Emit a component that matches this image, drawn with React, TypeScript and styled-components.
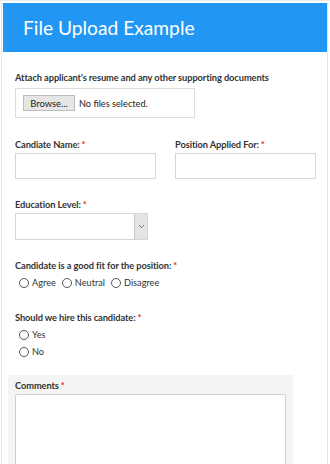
import React from "react";
import styled, { createGlobalStyle } from "styled-components";

const GlobalStyle = createGlobalStyle`
  html, body {
    margin: 0;
    padding: 0;
    background: #ffffff;
  }
  body {
    font-family: Lato, "Open Sans", sans-serif;
    color: #333;
  }
`;

const Page = styled.div`
  width: 330px;
  height: 464px;
  overflow: hidden;
  padding: 2px 0 0 1px;
  box-sizing: border-box;
  border-top: 1px solid #ececec;
`;

const Card = styled.div`
  width: 327px;
  height: 470px;
  box-sizing: border-box;
  border-left: 1px solid #e4e4e4;
  border-right: 1px solid #e4e4e4;
  background: #fff;
`;

const Header = styled.div`
  height: 49px;
  background: #2196f3;
  display: flex;
  align-items: center;
  padding-left: 20px;
  margin-left: 1px;
`;

const Title = styled.h1`
  margin: 0;
  color: #fff;
  font-size: 19.2px;
  font-weight: 400;
`;

const Body = styled.div`
  padding: 20px 0 0 13px;
  display: flex;
  flex-direction: column;
`;

const Field = styled.div<{ gap?: number }>`
  display: flex;
  flex-direction: column;
  margin-bottom: ${(p) => p.gap ?? 0}px;
`;

const Label = styled.label`
  display: block;
  font-size: 9.3px;
  font-weight: 700;
  color: #333;
  line-height: 12px;
  margin-bottom: 2px;
  letter-spacing: -0.1px;
`;

const Req = styled.span`
  color: #e8262b;
  margin-left: 2px;
`;

const FileBox = styled.div`
  margin-top: 2px;
  width: 180px;
  height: 30px;
  box-sizing: border-box;
  border: 1px solid #dcdcdc;
  display: flex;
  align-items: center;
  padding-left: 7px;
  gap: 4px;
`;

const BrowseButton = styled.div`
  height: 16px;
  width: 52px;
  box-sizing: border-box;
  background: #e6e6e6;
  border: 1px solid #bdbdbd;
  font-size: 9.4px;
  display: flex;
  align-items: center;
  justify-content: center;
  color: #222;
`;

const FileText = styled.span`
  font-size: 9.2px;
  color: #222;
`;

const Row = styled.div`
  display: flex;
  gap: 19px;
`;

const TextInput = styled.div`
  width: 141px;
  height: 26px;
  box-sizing: border-box;
  border: 1px solid #d6d6d6;
  background: #fff;
`;

const Select = styled.div`
  width: 133px;
  height: 27px;
  box-sizing: border-box;
  border: 1px solid #d6d6d6;
  display: flex;
  justify-content: flex-end;
`;

const SelectArrow = styled.div`
  width: 12px;
  background: #e4e4e4;
  border-left: 1px solid #c8c8c8;
  display: flex;
  align-items: center;
  justify-content: center;
`;

const RadioGroup = styled.div<{ vertical?: boolean }>`
  display: flex;
  flex-direction: ${(p) => (p.vertical ? "column" : "row")};
  gap: ${(p) => (p.vertical ? "5px" : "6px")};
  padding-left: 4px;
  margin-top: 3px;
`;

const RadioOption = styled.span`
  display: flex;
  align-items: center;
  gap: 3px;
  font-size: 9.2px;
  color: #333;
  line-height: 12px;
`;

const Circle = styled.span`
  width: 8px;
  height: 8px;
  border: 1px solid #555;
  border-radius: 50%;
  display: inline-block;
`;

const CommentsPanel = styled.div`
  margin-left: -7px;
  width: 285px;
  background: #f4f4f2;
  padding: 5px 0 0 7px;
  box-sizing: border-box;
  height: 120px;
`;

const TextArea = styled.div`
  margin-top: 2px;
  width: 271px;
  height: 100px;
  box-sizing: border-box;
  border: 1px solid #d0d0d0;
  border-radius: 2px;
  background: #fff;
`;

const Radio = ({ label }: { label: string }) => (
  <RadioOption>
    <Circle />
    {label}
  </RadioOption>
);

export default function App() {
  return (
    <Page>
      <GlobalStyle />
      <Card>
        <Header>
          <Title>File Upload Example</Title>
        </Header>
        <Body>
          <Field gap={21}>
            <Label>Attach applicant's resume and any other supporting documents</Label>
            <FileBox>
              <BrowseButton>Browse...</BrowseButton>
              <FileText>No files selected.</FileText>
            </FileBox>
          </Field>

          <Row>
            <Field gap={20}>
              <Label>
                Candiate Name:<Req>*</Req>
              </Label>
              <TextInput />
            </Field>
            <Field gap={20}>
              <Label>
                Position Applied For:<Req>*</Req>
              </Label>
              <TextInput />
            </Field>
          </Row>

          <Field gap={20}>
            <Label>
              Education Level:<Req>*</Req>
            </Label>
            <Select>
              <SelectArrow>
                <svg width="7" height="5" viewBox="0 0 7 5">
                  <path d="M1 1.2 L3.5 3.6 L6 1.2" fill="none" stroke="#666" strokeWidth="0.9" />
                </svg>
              </SelectArrow>
            </Select>
          </Field>

          <Field gap={23}>
            <Label>
              Candidate is a good fit for the position:<Req>*</Req>
            </Label>
            <RadioGroup>
              <Radio label="Agree" />
              <Radio label="Neutral" />
              <Radio label="Disagree" />
            </RadioGroup>
          </Field>

          <Field gap={17}>
            <Label>
              Should we hire this candidate:<Req>*</Req>
            </Label>
            <RadioGroup vertical>
              <Radio label="Yes" />
              <Radio label="No" />
            </RadioGroup>
          </Field>

          <CommentsPanel>
            <Label>
              Comments<Req>*</Req>
            </Label>
            <TextArea />
          </CommentsPanel>
        </Body>
      </Card>
    </Page>
  );
}
